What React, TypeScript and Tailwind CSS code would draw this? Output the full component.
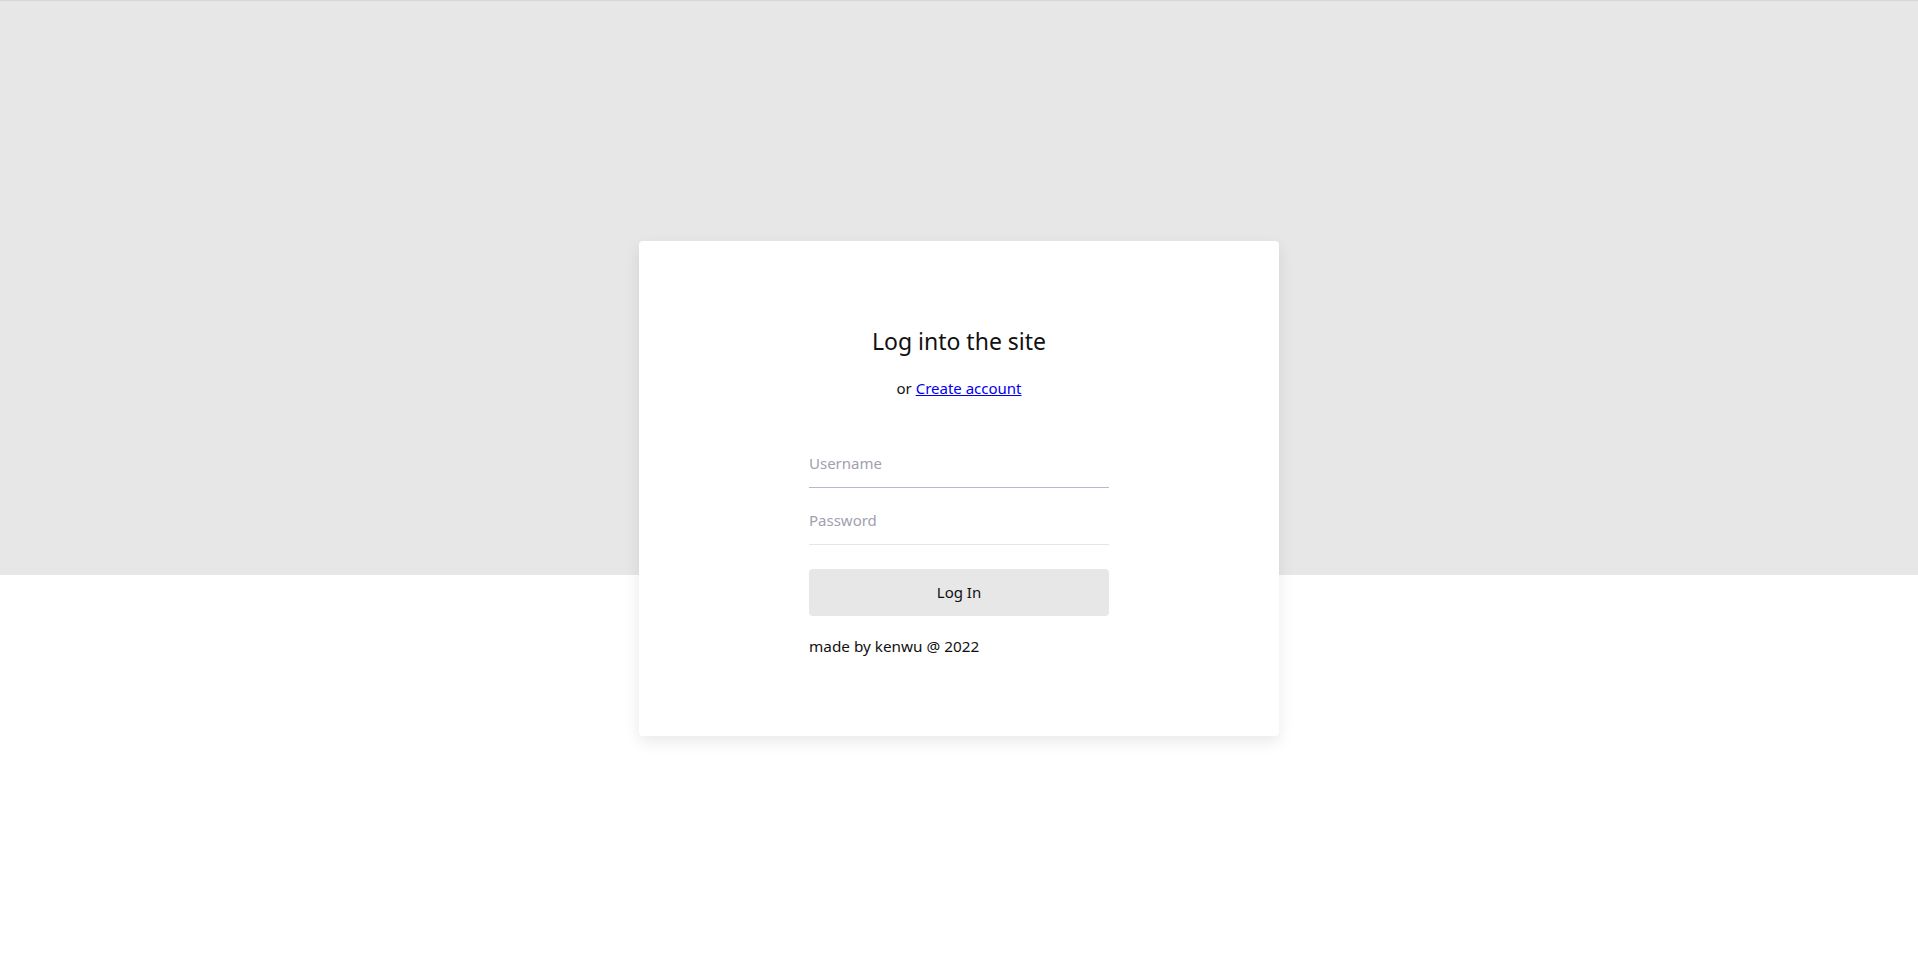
import React from "react";

export default function App() {
  return (
    <div
      className="h-screen w-full border-t border-[#d6d6d6] bg-[linear-gradient(#e7e7e7_574px,#ffffff_574px)] flex justify-center pt-[240px] text-[#111]"
      style={{ fontFamily: '"Noto Sans", "Open Sans", sans-serif' }}
    >
      <div className="w-[640px] h-[495px] bg-white rounded-[4px] shadow-[0_6px_16px_rgba(0,0,0,0.09)] flex flex-col items-center pt-[84px]">
        <h1 className="text-[23px] leading-[32px] font-normal text-[#111]">Log into the site</h1>
        <p className="mt-[19px] text-[15px] leading-[24px]">
          or{" "}
          <a href="#" className="text-[#0000ee] underline">
            Create account
          </a>
        </p>
        <form className="mt-[47px] w-[300px] flex flex-col" onSubmit={(e) => e.preventDefault()}>
          <input
            type="text"
            placeholder="Username"
            className="h-[41px] pb-[8px] border-b border-[#b9b7c9] outline-none text-[15px] placeholder:text-[#a2a0ae] bg-transparent"
          />
          <input
            type="password"
            placeholder="Password"
            className="mt-[16px] h-[41px] pb-[8px] border-b border-[#e5e5e5] outline-none text-[15px] placeholder:text-[#a2a0ae] bg-transparent"
          />
          <button
            type="submit"
            className="mt-[24px] h-[47px] rounded-[4px] bg-[#e7e7e7] text-[15px] text-[#111]"
          >
            Log In
          </button>
          <p className="mt-[18px] text-[15.3px] leading-[24px]">made by kenwu @ 2022</p>
        </form>
      </div>
    </div>
  );
}
